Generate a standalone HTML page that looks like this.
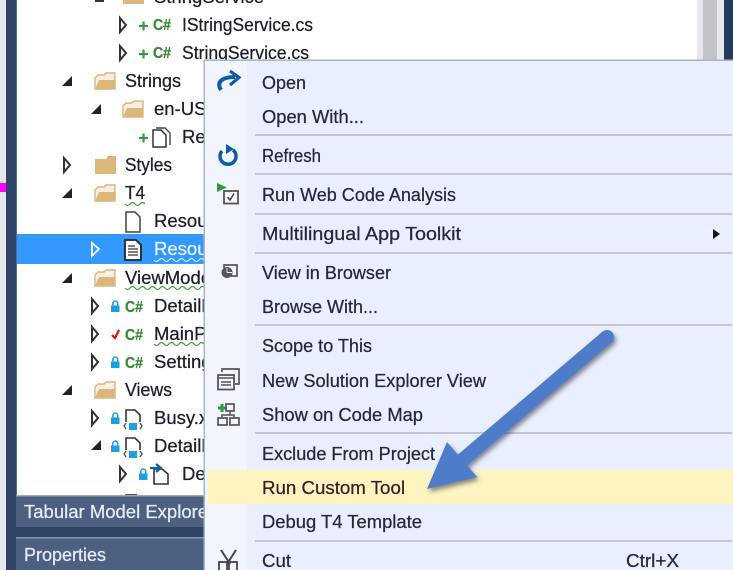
<!DOCTYPE html>
<html><head><meta charset="utf-8"><style>
html,body{margin:0;padding:0;width:733px;height:570px;overflow:hidden;background:#fff}
svg{display:block;position:absolute;left:0;top:0;filter:blur(.35px)}
text{font-family:"Liberation Sans",sans-serif;font-size:18.5px;fill:#1c1c2c;stroke:#1c1c2c;stroke-width:.25px}
.m{fill:#26283c;stroke:#26283c}.cs{font-weight:bold;font-size:15.5px;fill:#388a34;stroke:#388a34}.w{fill:#e6ebf6;stroke:#e6ebf6}
</style></head><body>
<svg width="733" height="570" viewBox="0 0 733 570" xmlns="http://www.w3.org/2000/svg">
<defs>
<path id="ex" d="M120 -7L126 0L120 7Z" fill="none" stroke="#333" stroke-width="2"/>
<path id="co" d="M0 10L10 0V10Z" fill="#222"/>
<path id="of" d="M0 6L3 3H9L11 1H20V17H0Z" fill="#f7efe0" stroke="#dcb67a" stroke-width="1.4"/>
<path id="of2" d="M0 17L4 8H20V17Z" fill="#dcb67a"/>
<path id="pl" d="M0 0H9M4.500 -4.500V4.500" stroke="#3c9a3c" stroke-width="2.200" fill="none"/>
<g id="lk"><rect x="0" y="3.500" width="8.500" height="6.500" fill="#1ba1e2"/><path d="M1.800 4V1.500A2.400 2.400 0 0 1 6.700 1.500V4" fill="none" stroke="#1ba1e2" stroke-width="1.500"/></g>
<g id="xd"><path d="M1 0H10L15 5V20H1Z" fill="#fff" stroke="#333" stroke-width="1.600"/><rect x="-2" y="12" width="20" height="9" fill="#fff"/><rect x="4" y="13" width="8" height="7" fill="#1ba1e2"/><path d="M1 13L-1 16L1 19M15 13L17 16L15 19" fill="none" stroke="#444" stroke-width="1.200"/></g>
</defs>

<rect width="733" height="570" fill="#fff"/>
<rect x="0" width="6" height="570" fill="#e6e6ec"/>
<rect x="0" y="183" width="6" height="9" fill="#ff00ff"/>
<rect x="6" width="10" height="570" fill="#2f4468"/>
<rect x="16" width="1" height="570" fill="#5a6c8a"/>
<rect x="697" width="27" height="60" fill="#e8e8ec"/>
<rect x="703" width="14" height="60" fill="#c3c4c9"/>
<rect x="724" width="9" height="60" fill="#263a5e"/>

<rect x="17" y="234" width="190" height="30" fill="#3399ff"/>

<rect x="95" y="0" width="9" height="2" fill="#333"/>
<rect x="123" y="0" width="21" height="4" fill="#dcb67a"/>
<text x="154" y="3">StringService</text>

<use href="#ex" y="25"/><use href="#pl" x="139" y="26"/><text x="153" y="30" class="cs" textLength="18" lengthAdjust="spacingAndGlyphs">C#</text>
<text x="182" y="31" textLength="131" lengthAdjust="spacingAndGlyphs">IStringService.cs</text>
<use href="#ex" y="53"/><use href="#pl" x="139" y="54"/><text x="153" y="58" class="cs" textLength="18" lengthAdjust="spacingAndGlyphs">C#</text>
<text x="182" y="59" textLength="127" lengthAdjust="spacingAndGlyphs">StringService.cs</text>

<use href="#co" x="62" y="76"/><use href="#of" x="95" y="72"/><use href="#of2" x="95" y="72"/>
<text x="125" y="87" textLength="56" lengthAdjust="spacingAndGlyphs">Strings</text>
<use href="#co" x="91" y="104"/><use href="#of" x="123" y="100"/><use href="#of2" x="123" y="100"/>
<text x="154" y="115">en-US</text>
<use href="#pl" x="139" y="138"/>
<path d="M156 128H165L170 133V145" fill="none" stroke="#444" stroke-width="1.400"/>
<path d="M153 130H161L166 135V147H153Z" fill="#fff" stroke="#333" stroke-width="1.500"/>
<text x="182" y="143">Resources.resw</text>

<path d="M64 158L70 165L64 172Z" fill="none" stroke="#333" stroke-width="2"/>
<path d="M95 159H106L108 156H116V174H95Z" fill="#dcb67a"/>
<text x="125" y="171" textLength="47" lengthAdjust="spacingAndGlyphs">Styles</text>

<use href="#co" x="62" y="188"/><use href="#of" x="95" y="184"/><use href="#of2" x="95" y="184"/>
<text x="125" y="199" textLength="20" lengthAdjust="spacingAndGlyphs">T4</text>
<path d="M125 204q2.500 3 5 0t5 0t5 0t5 0" fill="none" stroke="#3ca03c" stroke-width="1.200"/>

<path d="M126 212H135L140 217V232H126Z" fill="#fff" stroke="#444" stroke-width="1.500"/>
<text x="154" y="227">Resources.tt</text>

<path d="M92 243L99 249L92 256Z" fill="none" stroke="#fff" stroke-width="1.800"/>
<path d="M125 240H136L141 245V260H125Z" fill="#fff" stroke="#222" stroke-width="1.800"/>
<path d="M128 246H135M128 249H138M128 252H138M128 255H138" stroke="#333" stroke-width="1.300"/>
<text x="154" y="255" style="fill:#eaf3ff;stroke:#eaf3ff">Resources.cs</text>
<path d="M154 260q2.500 3 5 0t5 0t5 0t5 0t5 0t5 0t5 0t5 0t5 0t5 0" fill="none" stroke="#cfe6ff" stroke-width="1.200"/>

<use href="#co" x="62" y="273"/><use href="#of" x="95" y="269"/><use href="#of2" x="95" y="269"/>
<text x="125" y="284">ViewModels</text>
<path d="M125 288q2.500 3 5 0t5 0t5 0t5 0t5 0t5 0t5 0t5 0t5 0t5 0t5 0t5 0t5 0t5 0t5 0t5 0" fill="none" stroke="#3ca03c" stroke-width="1.200"/>

<path d="M92 299L98 306L92 313Z" fill="none" stroke="#333" stroke-width="2"/>
<use href="#lk" x="111" y="302"/><text x="125" y="312" class="cs" textLength="18" lengthAdjust="spacingAndGlyphs">C#</text>
<text x="154" y="312">DetailPage.cs</text>

<path d="M92 327L98 334L92 341Z" fill="none" stroke="#333" stroke-width="2"/>
<path d="M112 335L115 338L119 330" fill="none" stroke="#e51400" stroke-width="2.200"/>
<text x="125" y="340" class="cs" textLength="18" lengthAdjust="spacingAndGlyphs">C#</text>
<text x="154" y="340">MainPage.cs</text>
<path d="M154 344q2.500 3 5 0t5 0t5 0t5 0t5 0t5 0t5 0t5 0t5 0t5 0" fill="none" stroke="#3ca03c" stroke-width="1.200"/>

<path d="M92 355L98 362L92 369Z" fill="none" stroke="#333" stroke-width="2"/>
<use href="#lk" x="111" y="358"/><text x="125" y="368" class="cs" textLength="18" lengthAdjust="spacingAndGlyphs">C#</text>
<text x="154" y="368">Settings.cs</text>

<use href="#co" x="62" y="385"/><use href="#of" x="95" y="381"/><use href="#of2" x="95" y="381"/>
<text x="125" y="396" textLength="47" lengthAdjust="spacingAndGlyphs">Views</text>

<path d="M92 411L98 418L92 425Z" fill="none" stroke="#333" stroke-width="2"/>
<use href="#lk" x="111" y="414"/><use href="#xd" x="125" y="410"/>
<text x="154" y="424">Busy.xaml</text>

<use href="#co" x="91" y="440"/>
<use href="#lk" x="111" y="442"/><use href="#xd" x="125" y="438"/>
<text x="154" y="452">DetailPage.xaml</text>

<path d="M120 467L126 474L120 481Z" fill="none" stroke="#333" stroke-width="2"/>
<use href="#lk" x="139" y="470"/>
<path d="M154 469H162L168 474V484H154Z" fill="#fff" stroke="#333" stroke-width="1.600"/>
<path d="M150 468H160M156 464L161 468L156 472" fill="none" stroke="#0e5ca8" stroke-width="2.200"/>
<text x="182" y="480">Detail</text>
<rect x="125" y="494" width="12" height="2" fill="#555"/>

<rect x="16" y="496" width="190" height="31" fill="#4d6082"/>
<rect x="16" y="495" width="190" height="1.500" fill="#9aa7bd"/>
<text x="24" y="518" class="w">Tabular Model Explorer</text>
<rect x="16" y="527" width="190" height="10" fill="#2f4468"/>
<rect x="16" y="537" width="190" height="33" fill="#4d6082"/>
<rect x="16" y="537" width="190" height="1.500" fill="#8494ad"/>
<text x="24" y="561" class="w" textLength="82" lengthAdjust="spacingAndGlyphs">Properties</text>

<rect x="204" y="60" width="529" height="510" fill="#e9effe"/>
<rect x="205" y="61" width="42" height="509" fill="#f2f4fe"/>
<rect x="204" y="59.500" width="529" height="1.500" fill="#a9b4c8"/>
<rect x="203.500" y="60" width="1.500" height="510" fill="#a9b4c8"/>
<rect x="208" y="470" width="525" height="34" fill="#fdf4c1"/>

<g fill="#c3c5d2">
<rect x="255" y="134" width="477" height="2"/>
<rect x="255" y="173" width="477" height="2"/>
<rect x="255" y="213" width="477" height="2"/>
<rect x="255" y="252" width="477" height="2"/>
<rect x="255" y="324" width="477" height="2"/>
<rect x="255" y="432" width="477" height="2"/>
<rect x="255" y="540" width="477" height="2"/>
</g>

<text x="262" y="89" class="m" textLength="44" lengthAdjust="spacingAndGlyphs">Open</text>
<text x="262" y="123" class="m" textLength="102" lengthAdjust="spacingAndGlyphs">Open With...</text>
<text x="262" y="162" class="m" textLength="59" lengthAdjust="spacingAndGlyphs">Refresh</text>
<text x="262" y="201" class="m" textLength="194" lengthAdjust="spacingAndGlyphs">Run Web Code Analysis</text>
<text x="262" y="240" class="m" textLength="199" lengthAdjust="spacingAndGlyphs">Multilingual App Toolkit</text>
<text x="262" y="279" class="m" textLength="129" lengthAdjust="spacingAndGlyphs">View in Browser</text>
<text x="262" y="313" class="m" textLength="116" lengthAdjust="spacingAndGlyphs">Browse With...</text>
<text x="262" y="352" class="m" textLength="110" lengthAdjust="spacingAndGlyphs">Scope to This</text>
<text x="262" y="387" class="m" textLength="224" lengthAdjust="spacingAndGlyphs">New Solution Explorer View</text>
<text x="262" y="421" class="m" textLength="161" lengthAdjust="spacingAndGlyphs">Show on Code Map</text>
<text x="262" y="460" class="m" textLength="173" lengthAdjust="spacingAndGlyphs">Exclude From Project</text>
<text x="262" y="494" style="fill:#3a1c24;stroke:#3a1c24" textLength="143" lengthAdjust="spacingAndGlyphs">Run Custom Tool</text>
<text x="262" y="528" class="m" textLength="160" lengthAdjust="spacingAndGlyphs">Debug T4 Template</text>
<text x="262" y="567" class="m" textLength="29" lengthAdjust="spacingAndGlyphs">Cut</text>
<text x="626" y="567" class="m" textLength="53" lengthAdjust="spacingAndGlyphs">Ctrl+X</text>
<path d="M713 229L720 234L713 239Z" fill="#111"/>

<path d="M221 90C216 82 222 77 235 77" fill="none" stroke="#0e5ca8" stroke-width="4"/>
<path d="M230 71L239 77.500L230 85" fill="none" stroke="#0e5ca8" stroke-width="3.200"/>
<path d="M233 150A8 8 0 1 1 222 151" fill="none" stroke="#0e5ca8" stroke-width="3.500"/>
<path d="M226 144L234 149L226 154Z" fill="#0e5ca8"/>
<path d="M217 183V192L227 187.500Z" fill="#2f9a3c"/>
<rect x="224" y="191" width="14" height="12.500" fill="#f8f8fc" stroke="#555" stroke-width="1.800"/>
<path d="M227.500 197L230 200L234 193.500" fill="none" stroke="#444" stroke-width="1.600"/>
<path d="M224 268V265H237V276H230" fill="none" stroke="#555" stroke-width="1.700"/>
<circle cx="227" cy="272.500" r="5.500" fill="#555"/><path d="M227 272.500V268M227 272.500H232" stroke="#e9effe" stroke-width="1"/>
<path d="M222 372V369H239V384H235" fill="none" stroke="#555" stroke-width="1.700"/>
<rect x="218" y="375" width="16" height="14.500" fill="#f2f4fe" stroke="#555" stroke-width="1.800"/>
<path d="M218 378H234M221 382H231M221 385H231" stroke="#555" stroke-width="1.600"/>
<path d="M222 404V412M218 408H226" stroke="#2f9a3c" stroke-width="3"/>
<rect x="226" y="404" width="8" height="7" fill="none" stroke="#555" stroke-width="1.700"/>
<rect x="218" y="418" width="9" height="7" fill="none" stroke="#555" stroke-width="1.700"/>
<rect x="230" y="418" width="9" height="7" fill="none" stroke="#555" stroke-width="1.700"/>
<path d="M230 411V415M222 418V415H234V418" fill="none" stroke="#555" stroke-width="1.600"/>
<path d="M221 550L230 564M236 550L227 564" fill="none" stroke="#444" stroke-width="2"/>
<rect x="219" y="562" width="8" height="9" fill="none" stroke="#444" stroke-width="1.800"/>
<rect x="229" y="562" width="8" height="9" fill="none" stroke="#444" stroke-width="1.800"/>

<g style="filter:drop-shadow(2px 3px 2.500px rgba(40,40,60,.55))">
<path d="M607 337L460 462" stroke="#4e7ccb" stroke-width="14" stroke-linecap="round" fill="none"/>
<path d="M427 489L447 442L477 477Z" fill="#4e7ccb"/>
</g>
</svg>
</body></html>
